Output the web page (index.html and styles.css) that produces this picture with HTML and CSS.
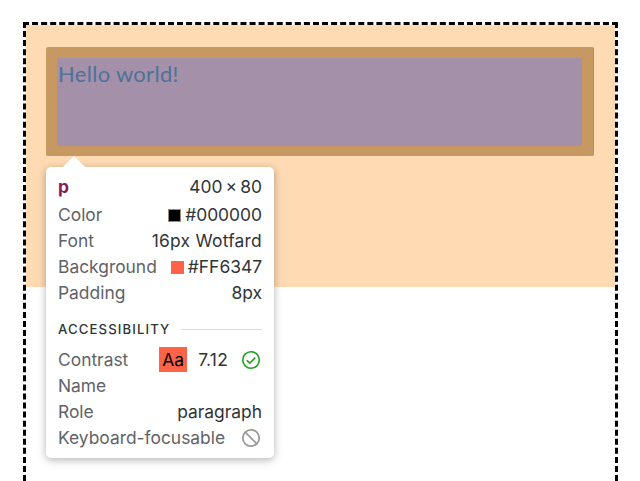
FILE: index.html
```html
<!DOCTYPE html>
<html lang="en">
<head>
<meta charset="utf-8">
<title>Inspect</title>
<link rel="stylesheet" href="styles.css">
</head>
<body>
<div class="frame">
  <div class="peach">
    <div class="margin-box">
      <p class="content">Hello world!</p>
    </div>
  </div>
  <div class="tip">
    <div class="arrow"></div>
    <div class="row head"><span class="tag">p</span><span class="val">400&#8201;×&#8201;80</span></div>
    <div class="row"><span class="lab">Color</span><span class="val"><i class="sw black"></i>#000000</span></div>
    <div class="row"><span class="lab">Font</span><span class="val wide">16px Wotfard</span></div>
    <div class="row"><span class="lab">Background</span><span class="val"><i class="sw tomato"></i>#FF6347</span></div>
    <div class="row"><span class="lab">Padding</span><span class="val">8px</span></div>
    <div class="sect"><span>ACCESSIBILITY</span><b></b></div>
    <div class="row"><span class="lab">Contrast</span><span class="val contrast"><span class="aa">Aa</span><span class="ratio">7.12</span>
      <svg class="ico" viewBox="0 0 20 20"><circle cx="10" cy="10" r="8.3" fill="none" stroke="#1fa01f" stroke-width="1.6"/><path d="M5.8 10.3l3 2.9 5.4-5.6" fill="none" stroke="#1fa01f" stroke-width="1.6"/></svg></span></div>
    <div class="row"><span class="lab">Name</span></div>
    <div class="row"><span class="lab">Role</span><span class="val">paragraph</span></div>
    <div class="row"><span class="lab">Keyboard-focusable</span><span class="val">
      <svg class="ico" viewBox="0 0 20 20"><circle cx="10" cy="10" r="8.2" fill="none" stroke="#9a9a9a" stroke-width="1.8"/><path d="M4.2 4.2l11.6 11.6" fill="none" stroke="#9a9a9a" stroke-width="1.8"/></svg></span></div>
  </div>
</div>
</body>
</html>
```
FILE: styles.css
```css
html, body { margin: 0; height: 100%; background: #fff; overflow: hidden; }
.frame {
  position: relative;
  box-sizing: border-box;
  margin: 22px 22px 0 23px;
  height: 459px;
  border: 3px dashed #000;
  border-bottom: 0;
}
.peach {
  background: #ffdab3;
  height: 262px;
  padding: 22px 21px 0 20px;
  box-sizing: border-box;
}
.margin-box {
  box-sizing: border-box;
  height: 109px;
  background: #c89863;
  border-right: 1px solid #f0705a;
  border-radius: 2px;
  padding: 10.5px 11px 11px 11px;
}
.content {
  margin: 0;
  height: 88px;
  background: #a491a9;
  color: #4e7199;
  font: 22px/32px Lato, sans-serif;
  letter-spacing: .3px;
  padding-left: 1px;
}
.tip {
  position: absolute;
  left: 20px;
  top: 142px;
  width: 228px;
  box-sizing: border-box;
  background: #fff;
  border-radius: 5px;
  padding: 7px 12px 7px 12px;
  box-shadow: 0 2px 9px rgba(0,0,0,.3);
  font: 17.4px/26px Inter, sans-serif;
}
.arrow {
  position: absolute;
  left: 17px;
  top: -11px;
  border: 11px solid transparent;
  border-top: 0;
  border-bottom-color: #fff;
}
.row { display: flex; justify-content: space-between; align-items: center; height: 26px; }
.head { height: 28px; box-sizing: border-box; padding-bottom: 2px; }
.lab { color: #5f6368; }
.val { color: #303438; display: flex; align-items: center; }
.wide { letter-spacing: .25px; }
.tag { color: #8a1a5c; font-weight: 700; }
.sw { width: 13px; height: 13px; margin-right: 4px; box-sizing: border-box; border: 1px solid #9a8a80; }
.black { background: #000; }
.tomato { background: #ff6347; }
.sect {
  display: flex; align-items: center; gap: 11px;
  height: 20px; margin-top: 13px; margin-bottom: 8px;
  font-size: 13.2px; letter-spacing: 1.1px; color: #303438; font-weight: 500;
}
.sect b { flex: 1; height: 1px; background: #dcdcdc; }
.aa { background: #ff6347; color: #000; width: 28px; height: 25px; line-height: 25px; text-align: center; margin: -2px 11px 0 0; }
.ratio { letter-spacing: .25px; }
.contrast .ico { margin-left: 13px; }
.ico { width: 20px; height: 20px; display: block; margin-right: 1px; }
```
